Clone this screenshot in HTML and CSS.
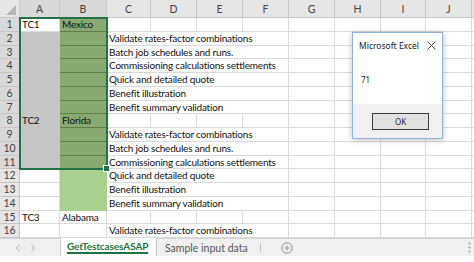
FILE: index.html
```html
<!DOCTYPE html>
<html lang="en">
<head>
    <meta charset="UTF-8">
    <meta name="viewport" content="width=device-width, initial-scale=1.0">
    <title>GetTestcasesASAP</title>
    <link rel="stylesheet" href="styles.css">
</head>
<body>
    <div class="sheet">
        <div class="grid" id="grid"></div>
        <div class="selection"><span class="handle"></span></div>

        <div class="dialog">
            <div class="dialog-body">
                <div class="dialog-title">
                    <span>Microsoft Excel</span>
                    <svg class="close" width="9" height="9" viewBox="0 0 9 9"><path d="M0.5 0.5 L8.5 8.5 M8.5 0.5 L0.5 8.5" stroke="#333" stroke-width="0.9" fill="none"/></svg>
                </div>
                <div class="dialog-msg">71</div>
            </div>
            <div class="dialog-foot">
                <button class="ok">OK</button>
            </div>
        </div>
    </div>

    <div class="tabbar">
        <div class="nav">
            <svg width="6" height="8" viewBox="0 0 6 8"><path d="M4.5 1 L1.5 4 L4.5 7" stroke="#c4c4c4" stroke-width="1.2" fill="none"/></svg>
            <svg width="6" height="8" viewBox="0 0 6 8"><path d="M1.5 1 L4.5 4 L1.5 7" stroke="#c4c4c4" stroke-width="1.2" fill="none"/></svg>
        </div>
        <div class="tab active"><span>GetTestcasesASAP</span></div>
        <div class="tab">Sample input data</div>
        <div class="tab-sep"></div>
        <svg class="add" width="12" height="12" viewBox="0 0 12 12"><circle cx="6" cy="6" r="5.2" stroke="#8a8a8a" stroke-width="0.9" fill="none"/><path d="M6 3.3 V8.7 M3.3 6 H8.7" stroke="#8a8a8a" stroke-width="0.9"/></svg>
        <svg class="grip" width="3" height="11" viewBox="0 0 3 11"><circle cx="1.5" cy="1.5" r="0.9" fill="#999"/><circle cx="1.5" cy="5.5" r="0.9" fill="#999"/><circle cx="1.5" cy="9.5" r="0.9" fill="#999"/></svg>
    </div>
    <div class="status"></div>

    <script>
        const cols = ["A", "B", "C", "D", "E", "F", "G", "H", "I", "J", ""];
        const rows = [
            ["TC1", "Mexico", ""],
            ["", "", "Validate rates-factor combinations"],
            ["", "", "Batch job schedules and runs."],
            ["", "", "Commissioning calculations settlements"],
            ["", "", "Quick and detailed quote"],
            ["", "", "Benefit illustration"],
            ["", "", "Benefit summary validation"],
            ["TC2", "Florida", ""],
            ["", "", "Validate rates-factor combinations"],
            ["", "", "Batch job schedules and runs."],
            ["", "", "Commissioning calculations settlements"],
            ["", "", "Quick and detailed quote"],
            ["", "", "Benefit illustration"],
            ["", "", "Benefit summary validation"],
            ["TC3", "Alabama", ""],
            ["", "", "Validate rates-factor combinations"]
        ];

        const grid = document.getElementById("grid");

        function cell(cls, text) {
            const div = document.createElement("div");
            div.className = cls;
            div.textContent = text || "";
            grid.appendChild(div);
            return div;
        }

        cell("corner");
        cols.forEach((c, i) => cell(i < 2 ? "colhead picked" : "colhead", c));

        rows.forEach((row, r) => {
            const n = r + 1;
            const inSel = n <= 11;
            cell(inSel ? "rowhead picked" : "rowhead", n);

            let a = "cell";
            if (inSel && n > 1) a += " sel-gray";
            cell(a, row[0]);

            let b = "cell";
            if (inSel) b += " sel-green";
            else if (n <= 14) b += " green";
            cell(b, row[1]);

            if (row[2]) {
                cell("cell wide", row[2]);
                for (let i = 6; i < cols.length; i++) cell("cell");
            } else {
                for (let i = 2; i < cols.length; i++) cell("cell");
            }
        });
    </script>
</body>
</html>
```

FILE: styles.css
```css
body {
    margin: 0;
    width: 474px;
    height: 262px;
    overflow: hidden;
    background: #fff;
    font-family: Lato, "Open Sans", sans-serif;
}
.sheet {
    position: relative;
    height: 238px;
    overflow: hidden;
}
.grid {
    display: grid;
    grid-template-columns: 20px 40px 47px 44px 46px 46px 46px 46px 46px 45px 46px 40px;
    grid-template-rows: 18px repeat(16, 13.75px);
    width: 512px;
    font-size: 10px;
    color: #111;
}
.grid > div {
    box-sizing: border-box;
    border-right: 1px solid #dadada;
    border-bottom: 1px solid #dadada;
    white-space: nowrap;
    line-height: 13px;
}
.corner {
    position: relative;
    background: #e6e6e6;
    border-color: #c6c6c6 !important;
}
.corner::after {
    content: "";
    position: absolute;
    right: 3px;
    bottom: 2px;
    border-left: 10px solid transparent;
    border-bottom: 10px solid #b5b5b5;
}
.colhead {
    background: #e6e6e6;
    border-color: #c6c6c6 !important;
    color: #444;
    text-align: center;
    line-height: 18px !important;
    font-size: 10.5px;
}
.rowhead {
    background: #e6e6e6;
    border-color: #c6c6c6 !important;
    color: #444;
    text-align: center;
    font-size: 10.5px;
}
.picked {
    background: #d9d9d9;
}
.cell {
    padding-left: 2px;
    letter-spacing: -0.2px;
}
.wide {
    grid-column: span 4;
}
.sel-gray {
    background: #c6c6c6;
    border-color: #c6c6c6 !important;
}
.sel-green {
    background: #88a96f;
    border-right-color: #88a96f !important;
    border-bottom-color: #5f7f4a !important;
}
.green {
    background: #a9d08e;
    border-color: #a9d08e !important;
}
.selection {
    position: absolute;
    left: 19px;
    top: 17px;
    width: 89px;
    height: 153px;
    box-sizing: border-box;
    border: 2px solid #217346;
}
.handle {
    position: absolute;
    right: -4px;
    bottom: -4px;
    width: 5px;
    height: 5px;
    background: #217346;
    border: 1px solid #fff;
}
.dialog {
    position: absolute;
    left: 352px;
    top: 32px;
    width: 91px;
    height: 107px;
    box-sizing: border-box;
    border: 1px solid #8fb4dc;
    background: #fff;
    box-shadow: 0 1px 6px rgba(0, 0, 0, 0.25);
    display: flex;
    flex-direction: column;
    font-family: "Noto Sans", sans-serif;
    color: #222;
}
.dialog-body {
    flex: 1;
}
.dialog-title {
    display: flex;
    align-items: center;
    justify-content: space-between;
    padding: 6px 6px 0 6px;
    font-size: 8.5px;
    height: 12px;
}
.dialog-msg {
    padding: 23px 0 0 8px;
    font-size: 8px;
}
.dialog-foot {
    height: 34px;
    background: #f0f0f0;
    display: flex;
    justify-content: center;
    align-items: center;
}
.ok {
    width: 57px;
    height: 17px;
    margin-left: 6px;
    padding: 0;
    background: #e1e1e1;
    border: 1.5px solid #3c3c3c;
    font-family: "Noto Sans", sans-serif;
    font-size: 8px;
    color: #222;
}
.tabbar {
    height: 18px;
    background: #f0f0f0;
    border-top: 1px solid #d4d4d4;
    box-sizing: border-box;
    display: flex;
    align-items: stretch;
    font-size: 10.5px;
    position: relative;
}
.nav {
    width: 60px;
    display: flex;
    align-items: center;
    gap: 9px;
    padding-left: 15px;
    box-sizing: border-box;
}
.tab {
    display: flex;
    align-items: center;
    padding: 0 8px;
    color: #555;
}
.tab.active {
    width: 97px;
    box-sizing: border-box;
    background: #fff;
    border-left: 1px solid #c6c6c6;
    border-right: 1px solid #c6c6c6;
    margin-top: -1px;
    color: #217346;
    font-weight: bold;
    font-size: 10px;
    letter-spacing: -0.1px;
    padding: 0 6px;
}
.tab.active span {
    border-bottom: 2px solid #217346;
    line-height: 12px;
}
.tab-sep {
    width: 1px;
    margin: 4px 0 4px 4px;
    background: #c0c0c0;
}
.add {
    align-self: center;
    margin-left: 20px;
}
.grip {
    align-self: center;
    margin-left: auto;
    margin-right: 3px;
}
.status {
    height: 6px;
    background: #fff;
}
```
